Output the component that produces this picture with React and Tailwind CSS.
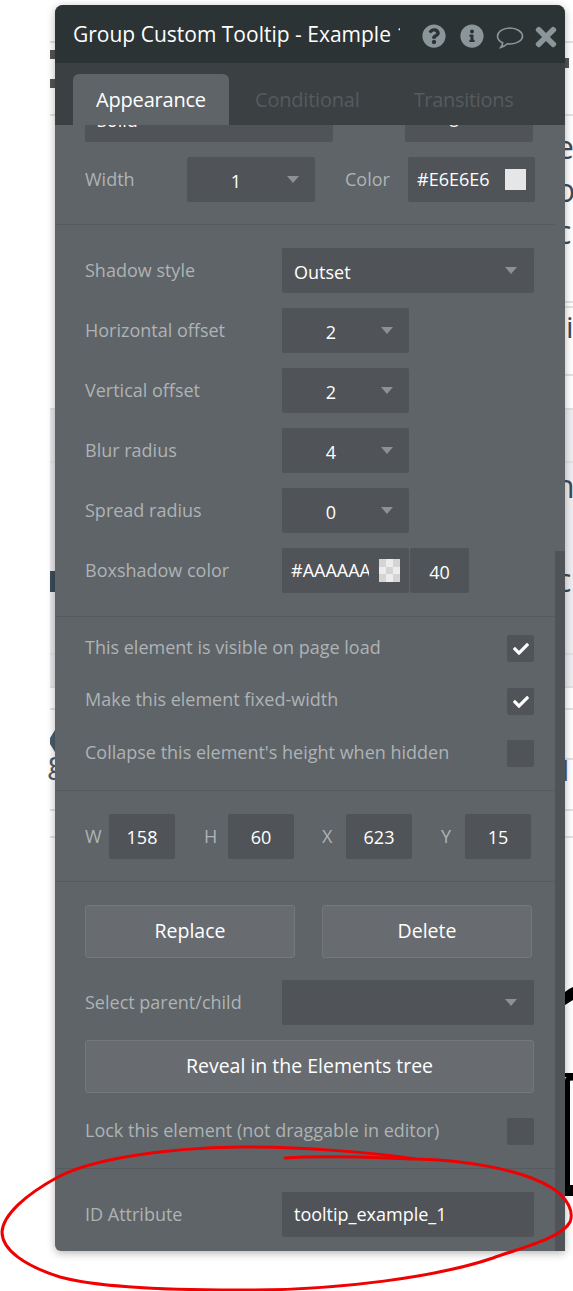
import React from "react";
import { FaQuestionCircle, FaInfoCircle, FaTimes, FaCheck } from "react-icons/fa";

const F = "font-['Open_Sans',sans-serif]";

function Caret() {
  return <span className="w-0 h-0 border-l-[6px] border-r-[6px] border-t-[7px] border-l-transparent border-r-transparent border-t-[#8e9194]" />;
}

function Label({ children, className = "" }) {
  return <span className={`text-[18px] leading-[24px] text-[#aeb3b5] whitespace-nowrap ${className}`}>{children}</span>;
}

function Dropdown({ value, className = "", center = false }) {
  return (
    <div className={`h-[45px] bg-[#505458] rounded-[2px] flex items-center text-[18px] text-white ${className}`}>
      {center ? (
        <>
          <span className="w-[98px] text-center pt-[3px]">{value}</span>
          <span className="ml-auto mr-[16px] flex"><Caret /></span>
        </>
      ) : (
        <>
          <span className="flex-1 pl-[12px] pt-[3px]">{value}</span>
          <span className="mr-[17px] flex"><Caret /></span>
        </>
      )}
    </div>
  );
}

function Row({ label, children }) {
  return (
    <div className="h-[45px] flex items-center">
      <Label className="w-[197px] pb-[2px]">{label}</Label>
      {children}
    </div>
  );
}

function Check({ label, checked, lift = "pb-[4px]" }) {
  return (
    <div className="h-[27px] flex items-center justify-between pr-[31px]">
      <Label className={lift}>{label}</Label>
      <div className="w-[27px] h-[27px] bg-[#505458] rounded-[2px] flex items-center justify-center">
        {checked && <FaCheck className="text-white w-[16px] h-[16px]" />}
      </div>
    </div>
  );
}

function Divider({ className = "" }) {
  return <div className={`h-px bg-[#565a5e] -ml-[30px] mr-[10px] ${className}`} />;
}

function Num({ label, value, labelW }) {
  return (
    <div className="flex items-center">
      <Label className={`pb-[2px] ${labelW}`}>{label}</Label>
      <div className="w-[66px] h-[45px] bg-[#505458] rounded-[2px] flex items-center justify-center text-[18px] text-white pt-[2px]">{value}</div>
    </div>
  );
}

function Button({ children, className = "" }) {
  return (
    <div className={`h-[53px] bg-[#686c70] border border-[#74787b] rounded-[3px] flex items-center justify-center text-[19.5px] text-white pb-[2px] ${className}`}>{children}</div>
  );
}

function Hline({ y, left }) {
  return <div className={`absolute h-[2px] ${left ? "left-[50px] w-[5px]" : "left-[565px] w-[8px]"} bg-[#e2e2e2]`} style={{ top: y }} />;
}

const leftLines = [41, 114, 408, 461, 653, 686, 708, 758, 809, 836];
const rightLines = [41, 114, 301, 306, 374, 408, 461, 653, 686, 708, 758, 809, 836];

export default function App() {
  return (
    <div className={`relative w-[573px] h-[1291px] bg-white overflow-hidden ${F}`}>
      {/* page behind the panel */}
      <div className="absolute left-[50px] top-[408px] w-[5px] h-[278px] bg-[#e9e9ee]" />
      <div className="absolute left-[565px] top-[408px] w-[8px] h-[278px] bg-[#eeeef2]" />
      {leftLines.map((y) => <Hline key={y} y={y} left />)}
      {rightLines.map((y) => <Hline key={y} y={y} />)}
      <div className="absolute left-[50px] top-[50px] w-[5px] h-[9px] bg-[#555]" />
      <div className="absolute left-[50px] top-[79px] w-[5px] h-[9px] bg-[#555]" />
      <div className="absolute left-[565px] top-[58px] w-[4px] h-[10px] bg-[#555]" />
      <div className="absolute left-[50px] top-[571px] w-[5px] h-[21px] bg-[#3e4c58]" />
      <svg className="absolute left-[50px] top-[730px]" width="5" height="22" viewBox="0 0 5 22">
        <path d="M5 0 L0 8 V14 L5 22Z" fill="#4a5c6b" />
      </svg>
      <div className="absolute left-[48px] top-[747px] text-[30px] leading-[30px] text-[#4d5a66]">g</div>
      <div className="absolute left-[556px] top-[131px] text-[32px] leading-[32px] text-[#3e4c58]">e</div>
      <div className="absolute left-[556px] top-[174px] text-[32px] leading-[32px] text-[#3e4c58]">o</div>
      <div className="absolute left-[556px] top-[216px] text-[32px] leading-[32px] text-[#3e4c58]">c</div>
      <div className="absolute left-[566px] top-[312px] text-[30px] leading-[30px] text-[#3e4c58]">i</div>
      <div className="absolute left-[555px] top-[470px] text-[32px] leading-[32px] text-[#3e4c58]">n</div>
      <div className="absolute left-[556px] top-[564px] text-[32px] leading-[32px] text-[#3e4c58]">c</div>
      <div className="absolute left-[552px] top-[755px] text-[28px] leading-[30px] text-[#4d5a66]">d</div>
      <svg className="absolute left-[565px] top-[980px]" width="8" height="220" viewBox="0 0 8 220">
        <path d="M0 12 Q3 9 8 7 V20 L0 25Z" fill="#000" />
        <path d="M2.5 210 V100 Q2.5 98 8 98" fill="none" stroke="#000" strokeWidth="5" />
        <path d="M0 93 H8 V97 H0Z" fill="#000" />
        <path d="M0 205 H8 V216 H0Z" fill="#000" />
      </svg>

      {/* editor panel */}
      <div className="absolute left-[55px] top-[5px] w-[510px] h-[1246px] flex flex-col bg-[#5f6468] rounded-t-[8px] rounded-bl-[6px] overflow-hidden shadow-[0_2px_8px_rgba(0,0,0,0.3)]">
        <div className="h-[58px] shrink-0 bg-[#2c3335] flex items-center pl-[18px] text-white">
          <div className="w-[327px] overflow-hidden whitespace-nowrap text-[21px] leading-[28px]">Group Custom Tooltip - Example 1</div>
          <div className="flex items-center ml-[22px] mt-[4px] text-[#8a9699]">
            <FaQuestionCircle className="w-[24px] h-[24px]" />
            <FaInfoCircle className="w-[24px] h-[24px] ml-[14px]" />
            <svg className="ml-[12px] mt-[4px]" width="28" height="26" viewBox="0 0 28 24" fill="none" stroke="currentColor" strokeWidth="1.6">
              <path d="M14 2C7 2 1.5 5.6 1.5 10.2c0 2.9 2.1 5.2 5.2 6.6-.2 1.7-1 3.3-2 4.6 2.6-.6 5-2 6.6-3.6 1 .2 1.7.2 2.7.2 7 0 12.5-3.6 12.5-7.8S21 2 14 2z" />
            </svg>
            <FaTimes className="w-[30px] h-[30px] ml-[7px] mt-[2px]" />
          </div>
        </div>
        <div className="h-[62px] shrink-0 bg-[#3b4043] flex items-end pl-[18px]">
          <div className="w-[156px] h-[51px] bg-[#5f6468] rounded-t-[6px] flex items-center justify-center text-white text-[20px] tracking-[-0.2px]">Appearance</div>
          <div className="ml-[26px] h-[51px] flex items-center text-[20px] tracking-[-0.2px] text-[#565b5e]">Conditional</div>
          <div className="ml-[54px] h-[51px] flex items-center text-[20px] tracking-[-0.3px] text-[#565b5e]">Transitions</div>
        </div>

        <div className="relative flex-1 overflow-hidden pl-[30px]">
          <div className="absolute right-0 top-[426px] bottom-0 w-[10px] bg-[#505458]" />

          <div className="-mt-[28px] flex h-[45px]">
            <div className="w-[248px] bg-[#505458] rounded-[2px] flex items-center pl-[12px] text-[18px] text-white pt-[2px]">Solid</div>
            <div className="ml-[72px] w-[128px] bg-[#505458] rounded-[2px] flex items-center justify-center text-[18px] text-white pr-[30px] pt-[2px]">8</div>
          </div>

          <div className="mt-[15px] h-[45px] flex items-center">
            <Label className="w-[102px] pb-[2px]">Width</Label>
            <Dropdown value="1" center className="w-[128px]" />
            <Label className="ml-[30px] w-[63px] pb-[2px]">Color</Label>
            <div className="w-[127px] h-[45px] bg-[#505458] rounded-[2px] flex items-center pl-[9px] text-[18px] text-white">
              <span className="w-[88px] pb-[1px]">#E6E6E6</span>
              <span className="w-[21px] h-[21px] bg-[#e6e6e6]" />
            </div>
          </div>

          <Divider className="mt-[22px]" />

          <div className="mt-[23px] flex flex-col gap-[15px]">
            <Row label="Shadow style"><Dropdown value="Outset" className="w-[252px]" /></Row>
            <Row label="Horizontal offset"><Dropdown value="2" center className="w-[127px]" /></Row>
            <Row label="Vertical offset"><Dropdown value="2" center className="w-[127px]" /></Row>
            <Row label="Blur radius"><Dropdown value="4" center className="w-[127px]" /></Row>
            <Row label="Spread radius"><Dropdown value="0" center className="w-[127px]" /></Row>
            <Row label="Boxshadow color">
              <div className="w-[127px] h-[45px] bg-[#505458] rounded-[2px] flex items-center pl-[9px] text-[18px] text-white">
                <span className="w-[78px] overflow-hidden whitespace-nowrap">#AAAAAA</span>
                <span className="ml-[10px] w-[21px] h-[23px] grid grid-cols-3 grid-rows-3">
                  {[0, 1, 2, 3, 4, 5, 6, 7, 8].map((i) => (
                    <span key={i} className={i % 2 === 0 ? "bg-[#d4d4d4]" : "bg-[#ececec]"} />
                  ))}
                </span>
              </div>
              <div className="ml-px w-[59px] h-[45px] bg-[#505458] rounded-[2px] flex items-center justify-center text-[18px] text-white pt-[3px]">40</div>
            </Row>
          </div>

          <Divider className="mt-[23px]" />

          <div className="mt-[18px] flex flex-col gap-[26px]">
            <Check label="This element is visible on page load" checked />
            <Check label="Make this element fixed-width" checked lift="pb-[6px]" />
            <div className="-mt-[1px]"><Check label="Collapse this element's height when hidden" /></div>
          </div>

          <Divider className="mt-[23px]" />

          <div className="mt-[23px] flex">
            <Num label="W" value="158" labelW="w-[24px]" />
            <Num label="H" value="60" labelW="w-[24px] ml-[29px]" />
            <Num label="X" value="623" labelW="w-[24px] ml-[28px]" />
            <Num label="Y" value="15" labelW="w-[24px] ml-[29px]" />
          </div>

          <Divider className="mt-[22px]" />

          <div className="mt-[23px] flex">
            <Button className="w-[210px]">Replace</Button>
            <Button className="ml-[27px] w-[210px]">Delete</Button>
          </div>

          <div className="mt-[22px]">
            <Row label="Select parent/child"><Dropdown value="" className="w-[252px]" /></Row>
          </div>

          <Button className="mt-[15px] w-[449px]">Reveal in the Elements tree</Button>

          <div className="mt-[25px]"><Check label="Lock this element (not draggable in editor)" lift="pb-[4px]" /></div>

          <Divider className="mt-[23px]" />

          <div className="mt-[23px]">
            <Row label="ID Attribute">
              <div className="w-[252px] h-[45px] bg-[#505458] rounded-[2px] flex items-center pl-[12px] text-[18px] text-white">tooltip_example_1</div>
            </Row>
          </div>
        </div>
      </div>

      {/* red hand-drawn annotation */}
      <svg className="absolute left-0 top-0 pointer-events-none" width="573" height="1291" viewBox="0 0 573 1291" fill="none">
        <path
          d="M285 1158 C330 1155 380 1158 416 1159 C460 1160 520 1168 552 1188 C568 1198 574 1212 570 1222 C562 1238 520 1248 493 1258 C440 1276 340 1291 237 1290 C170 1290 100 1288 60 1277 C25 1266 2 1250 2 1232 C3 1215 25 1195 58 1177 C90 1160 160 1148 240 1147 C300 1147 370 1152 416 1159"
          stroke="#f00000"
          strokeWidth="3"
          strokeLinecap="round"
        />
      </svg>
    </div>
  );
}
